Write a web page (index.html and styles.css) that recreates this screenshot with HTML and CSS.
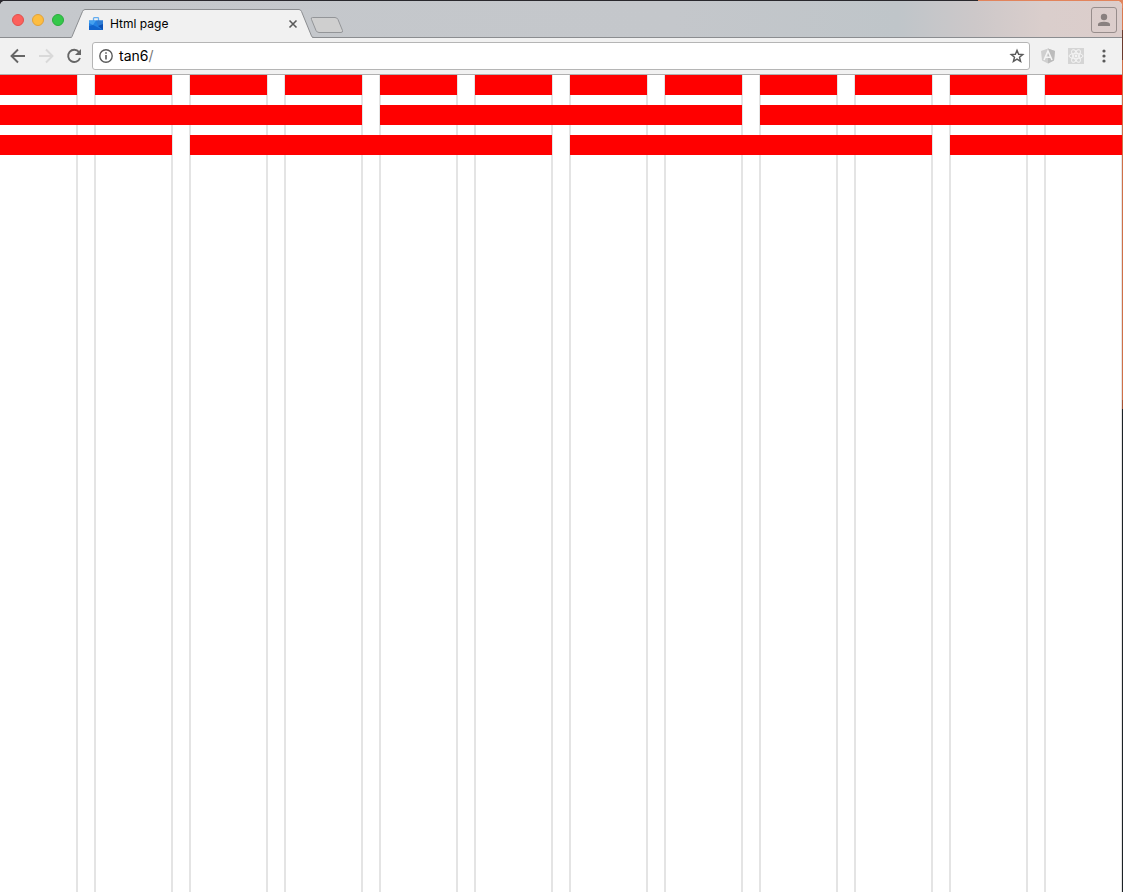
FILE: index.html
```html
<!DOCTYPE html>
<html lang="en">
<head>
<meta charset="utf-8">
<title>Html page</title>
<link rel="stylesheet" href="styles.css">
</head>
<body>
<div class="window">
  <header class="titlebar">
    <div class="lights">
      <button class="light light-close" aria-label="Close window"></button>
      <button class="light light-min" aria-label="Minimize window"></button>
      <button class="light light-max" aria-label="Maximize window"></button>
    </div>
    <div class="tab">
      <svg class="tab-shape" width="244" height="29" viewBox="0 0 244 29" aria-hidden="true"><path d="M0 28.500Q1.500 28.500 2 27.500L12.500 2.500Q13.300 .5 15 .5H229Q230.700 .5 231.500 2.500L241.500 27Q242 28.500 244 28.500" fill="#f1f1f1" stroke="#8b8d90"/><path d="M2 28.500H242" stroke="#f1f1f1"/></svg>
      <svg class="favicon" width="14" height="14" viewBox="0 0 14 14" aria-hidden="true"><path d="M4.500 4V1.500Q4.500 .7 5.300 .7H8.700Q9.500 .7 9.500 1.500V4" fill="none" stroke="#65adf0" stroke-width="1.300"/><path d="M0 3.500H14V13H0Z" fill="#2382e4"/><path d="M0 3.500H7L4 8L0 6Z" fill="#45a1ef"/><path d="M0 9L4 8L14 13H0Z" fill="#1264cc"/><path d="M7 3.500H14V7L9 9Z" fill="#2c7bd4"/><path d="M9 9L14 7V13Z" fill="#0d51b5"/></svg>
      <span class="tab-title">Html page</span>
      <button class="tab-close" aria-label="Close tab"><svg width="10" height="10" viewBox="0 0 10 10"><path d="M1.500 1.500L8.500 8.500M8.500 1.500L1.500 8.500" stroke="#5a5a5a" stroke-width="1.600"/></svg></button>
    </div>
    <button class="new-tab" aria-label="New tab"><svg width="34" height="18" viewBox="0 0 34 18"><path d="M2.500 1.500H25Q27 1.500 28 3.500L32.500 14.500Q33 16.500 31 16.500H9Q7 16.500 6 14.500L1.500 3.500Q.5 1.500 2.500 1.500Z" fill="#cfcfcf" stroke="#939598"/></svg></button>
    <button class="profile" aria-label="Profile"><svg width="14" height="14" viewBox="0 0 14 14"><circle cx="7" cy="4" r="3.200" fill="#89807f"/><path d="M1 13V11.500Q1 8.800 7 8.800T13 11.500V13Z" fill="#89807f"/></svg></button>
  </header>
  <nav class="toolbar">
    <button class="tool" aria-label="Back"><svg width="16" height="16" viewBox="0 0 16 16"><path d="M15 8H2M8 1.500L1.500 8L8 14.500" fill="none" stroke="#666" stroke-width="1.900"/></svg></button>
    <button class="tool" aria-label="Forward" disabled><svg width="16" height="16" viewBox="0 0 16 16"><path d="M1 8H14M8 1.500L14.500 8L8 14.500" fill="none" stroke="#d9d9d9" stroke-width="1.900"/></svg></button>
    <button class="tool" aria-label="Reload"><svg width="16" height="16" viewBox="0 0 16 16"><path d="M13 4A6.100 6.100 0 1 0 14 10" fill="none" stroke="#666" stroke-width="1.900"/><path d="M15 1V7H9Z" fill="#666"/></svg></button>
    <div class="omnibox">
      <svg width="14" height="14" viewBox="0 0 14 14" aria-hidden="true"><circle cx="7" cy="7" r="6.200" fill="none" stroke="#5a5a5a" stroke-width="1.400"/><path d="M7 6V10.500M7 3.300V4.800" stroke="#5a5a5a" stroke-width="1.600"/></svg>
      <a class="address" href="#">tan6<span class="slash">/</span></a>
      <button class="star" aria-label="Bookmark"><svg width="16" height="16" viewBox="0 0 16 16"><path d="M8 2.300L9.600 6.300L13.800 6.500L10.500 9.300L11.600 13.400L8 11.100L4.400 13.400L5.500 9.300L2.200 6.500L6.400 6.300Z" fill="none" stroke="#5a5a5a" stroke-width="1.400"/></svg></button>
    </div>
    <button class="tool" aria-label="Angular"><svg width="16" height="16" viewBox="0 0 16 16"><path d="M8 .5L15 3L14 12.500L8 15.500L2 12.500L1 3Z" fill="#cfcfcf"/><path d="M8 .5L15 3L14 12.500L8 15.500Z" fill="#bcbcbc"/><path d="M4 12L8 3L12 12M5.500 9.300H10.500" fill="none" stroke="#f4f4f4" stroke-width="1.600"/></svg></button>
    <button class="tool" aria-label="React"><svg width="16" height="16" viewBox="0 0 16 16"><path d="M0 0H16V16H0Z" fill="#d5d5d5"/><g fill="none" stroke="#f4f4f4"><ellipse cx="8" cy="8" rx="7" ry="2.700"/><ellipse cx="8" cy="8" rx="7" ry="2.700" transform="rotate(60 8 8)"/><ellipse cx="8" cy="8" rx="7" ry="2.700" transform="rotate(120 8 8)"/></g><circle cx="8" cy="8" r="1.400" fill="#f4f4f4"/></svg></button>
    <button class="tool" aria-label="Menu"><svg width="16" height="16" viewBox="0 0 16 16"><g fill="#5a5a5a"><circle cx="8" cy="3" r="1.600"/><circle cx="8" cy="8" r="1.600"/><circle cx="8" cy="13" r="1.600"/></g></svg></button>
  </nav>
  <main class="page">
    <div class="guides grid" aria-hidden="true">
      <i></i><i></i><i></i><i></i><i></i><i></i><i></i><i></i><i></i><i></i><i></i><i></i>
    </div>
    <div class="rows grid">
      <div class="box"></div><div class="box"></div><div class="box"></div><div class="box"></div>
      <div class="box"></div><div class="box"></div><div class="box"></div><div class="box"></div>
      <div class="box"></div><div class="box"></div><div class="box"></div><div class="box"></div>
      <div class="box span-4"></div><div class="box span-4"></div><div class="box span-4"></div>
      <div class="box span-2"></div><div class="box span-4"></div><div class="box span-4"></div><div class="box span-2"></div>
    </div>
  </main>
</div>
</body>
</html>
```
FILE: styles.css
```css
* {
  box-sizing: border-box;
}

body {
  margin: 0;
  min-height: 100vh;
  display: flex;
  padding: 1px 1px 0 0;
  font-family: Inter, "Liberation Sans", sans-serif;
  background:
    linear-gradient(#e2845c, #e2845c) right top / 145px 8px no-repeat,
    linear-gradient(#d9794f 0 30px, #6b3a2c 30px 60px, #cf7048 60px 400px, #a65233 400px 409px, #1c2226 409px) right top / 1px 100% no-repeat,
    #29282d;
}

button {
  border: 0;
  padding: 0;
  background: none;
  font: inherit;
}

svg {
  display: block;
}

.window {
  flex: 1;
  display: flex;
  flex-direction: column;
  border-radius: 5px 5px 0 0;
  overflow: hidden;
  background: #fff;
}

.titlebar {
  height: 37px;
  display: flex;
  align-items: flex-end;
  padding: 0 5px 0 12px;
  border-bottom: 1px solid #8b8d90;
  background: linear-gradient(90deg, #c5c8cc 0%, #c4c7cb 60%, #bfc5c9 80%, #cdc8c9 87%, #dacecc 93%, #dccdcb 100%);
}

.lights {
  display: flex;
  gap: 8px;
  align-self: center;
  margin-right: 8px;
  padding-top: 2px;
}

.light {
  width: 12px;
  height: 12px;
  border: 1px solid;
  border-radius: 50%;
}

.light-close {
  background: #fc605b;
  border-color: #e0504c;
}

.light-min {
  background: #fdbd40;
  border-color: #e0a13a;
}

.light-max {
  background: #34c84a;
  border-color: #2cab3e;
}

.tab {
  position: relative;
  width: 244px;
  height: 29px;
  margin: 0 0 -1px -2px;
  padding: 0 16px 0 19px;
  display: flex;
  align-items: center;
}

.tab-shape {
  position: absolute;
  inset: 0;
}

.favicon,
.tab-title,
.tab-close {
  position: relative;
}

.tab-title {
  flex: 1;
  margin-left: 7px;
  font-size: 12px;
  line-height: 16px;
  color: #000;
}

.new-tab {
  margin: 0 auto 3px -4px;
}

.profile {
  width: 26px;
  height: 26px;
  margin-bottom: 4px;
  display: grid;
  place-items: center;
  border: 1px solid #978d8c;
  border-radius: 3px;
}

.toolbar {
  height: 37px;
  display: flex;
  align-items: center;
  gap: 12px;
  padding: 0 10px;
  border-bottom: 1px solid #b0b0b0;
  background: #f1f1f1;
}

.omnibox {
  flex: 1;
  height: 28px;
  display: flex;
  align-items: center;
  gap: 6px;
  margin: 0 -2px;
  padding: 0 4px 0 6px;
  border: 1px solid #b5b5b5;
  border-radius: 3px;
  background: #fff;
}

.address {
  flex: 1;
  font-size: 14px;
  line-height: 20px;
  color: #000;
  text-decoration: none;
}

.slash {
  color: #777;
}

.page {
  flex: 1;
  display: grid;
  overflow: hidden;
}

.grid {
  grid-area: 1 / 1;
  display: grid;
  grid-template-columns: repeat(12, 1fr);
  column-gap: 18px;
}

.guides i {
  margin: 0 -1px;
  border: solid #e4e4e4;
  border-width: 0 2px;
}

.guides i:first-child {
  border-left: 0;
}

.rows {
  z-index: 1;
  row-gap: 10px;
  align-content: start;
}

.box {
  height: 20px;
  background: #f00;
}

.span-2 {
  grid-column: span 2;
}

.span-4 {
  grid-column: span 4;
}
```
